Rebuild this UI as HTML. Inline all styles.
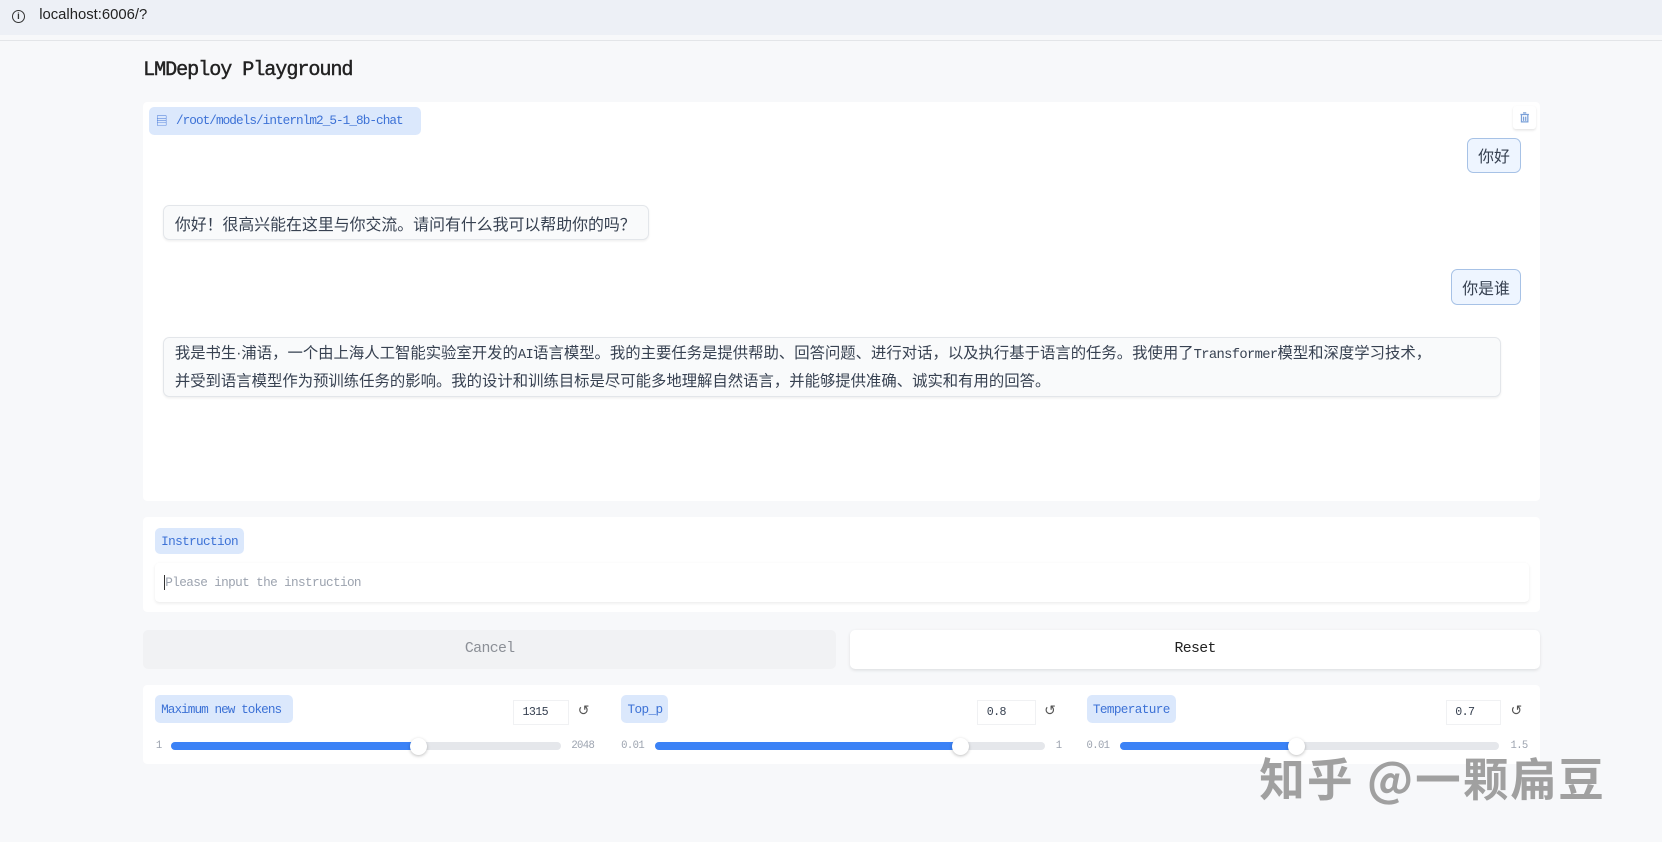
<!DOCTYPE html>
<html><head><meta charset="utf-8"><style>
html{zoom:1.06}
body{margin:0;width:1568px;height:794px;background:#f7f8fa;position:relative;overflow:hidden;font-family:"Liberation Sans","Noto Sans CJK SC",sans-serif;}
.a{position:absolute}
.mono{font-family:"Liberation Mono","Noto Sans CJK SC",monospace;white-space:nowrap;letter-spacing:-0.6px}
.panel{background:#fff;border-radius:4px}
.chip{background:#dbe8fc;color:#3d72d6;border-radius:5px;font-size:12px;display:flex;align-items:center;padding:0 6px;box-sizing:border-box}
.ub{background:#eef5ff;border:1px solid #a7c2e6;border-radius:6px;color:#374151;font-size:15px;display:flex;align-items:center;justify-content:center;box-sizing:border-box}
.bb{background:#f9fafb;border:1px solid #e3e6ea;border-radius:6px;color:#374151;font-size:15px;box-sizing:border-box;box-shadow:0 1px 2px rgba(0,0,0,.06)}
.track{height:8px;border-radius:4px;background:#e5e7eb}
.fill{height:8px;border-radius:4px;background:#3b82f6;position:absolute;left:0;top:0}
.knob{width:16px;height:16px;border-radius:50%;background:#fff;position:absolute;top:-4px;box-shadow:0 1px 3px rgba(0,0,0,.25)}
.sm{font-size:10px;color:#9ca3af}
.num{font-size:11px;color:#374151;background:#fff;border:1px solid #f0f1f3;box-sizing:border-box;display:flex;align-items:center;padding-left:8px}
.rs{font-size:13px;color:#555}
</style></head><body>
<div class="a" style="left:0;top:0;width:1568px;height:33px;background:#edf0f6"></div>
<div class="a" style="left:0;top:38px;width:1568px;height:1px;background:#e3e5e8"></div>
<div class="a" style="left:11px;top:9px;width:11px;height:11px;border:1.5px solid #333;border-radius:50%;font-size:9px;line-height:11px;text-align:center;font-weight:bold;color:#333">i</div>
<div class="a" style="left:37px;top:7px;font-size:14px;color:#222">localhost:6006/?</div>

<div class="a mono" style="left:135px;top:56px;font-size:19px;color:#222;letter-spacing:-1px;-webkit-text-stroke:0.4px #222">LMDeploy Playground</div>

<div class="a panel" style="left:135px;top:96px;width:1318px;height:377px"></div>
<div class="a chip mono" style="left:141px;top:101px;width:256px;height:26px;font-size:12px;letter-spacing:-0.9px"><span style="font-size:11px;margin-right:8px;letter-spacing:0">&#9636;</span>/root/models/internlm2_5-1_8b-chat</div>
<div class="a" style="left:1427px;top:100px;width:22px;height:22px;background:#fff;box-shadow:0 1px 2px rgba(0,0,0,.1);border-radius:3px">
<svg width="22" height="22" viewBox="0 0 22 22"><path d="M7 8h8M8 8v7h6V8M9.5 6.5h3M10 10v4M12 10v4" stroke="#7aa0d8" fill="none" stroke-width="1.2"/></svg></div>
<div class="a ub" style="left:1384px;top:130px;width:51px;height:33px">你好</div>
<div class="a bb" style="left:154px;top:193px;width:458px;height:33px;padding:6px 10px">你好！很高兴能在这里与你交流。请问有什么我可以帮助你的吗？</div>
<div class="a ub" style="left:1369px;top:254px;width:66px;height:34px">你是谁</div>
<div class="a bb" style="left:154px;top:318px;width:1262px;height:57px;padding:3px 10px;line-height:24px;font-size:14.5px">我是书生·浦语，一个由上海人工智能实验室开发的<span class="mono" style="font-size:13px">AI</span>语言模型。我的主要任务是提供帮助、回答问题、进行对话，以及执行基于语言的任务。我使用了<span class="mono" style="font-size:13px">Transformer</span>模型和深度学习技术，<br>并受到语言模型作为预训练任务的影响。我的设计和训练目标是尽可能多地理解自然语言，并能够提供准确、诚实和有用的回答。</div>

<div class="a panel" style="left:135px;top:488px;width:1318px;height:89px"></div>
<div class="a chip mono" style="left:146px;top:498px;width:84px;height:25px">Instruction</div>
<div class="a mono" style="left:146px;top:531px;width:1296px;height:37px;background:#fff;box-shadow:0 1px 3px rgba(0,0,0,.08);border-radius:4px;font-size:12px;color:#9ca3af;display:flex;align-items:center;padding-left:9px;box-sizing:border-box"><span style="border-left:1px solid #333;height:14px"></span>Please input the instruction</div>

<div class="a mono" style="left:135px;top:594px;width:654px;height:37px;background:#f1f2f4;border-radius:5px;color:#8b8f96;font-size:14px;display:flex;align-items:center;justify-content:center">Cancel</div>
<div class="a mono" style="left:802px;top:594px;width:651px;height:37px;background:#fff;border-radius:5px;box-shadow:0 1px 3px rgba(0,0,0,.1);color:#222;font-size:14px;display:flex;align-items:center;justify-content:center">Reset</div>

<div class="a panel" style="left:135px;top:646px;width:1318px;height:75px"></div>
<div class="a chip mono" style="left:146px;top:656px;width:130px;height:26px;letter-spacing:-0.9px">Maximum new tokens</div>
<div class="a num mono" style="left:484px;top:660px;width:53px;height:24px">1315</div>
<div class="a rs" style="left:545px;top:663px">↺</div>
<div class="a sm mono" style="left:147px;top:698px">1</div>
<div class="a track" style="left:161px;top:700px;width:368px"><div class="fill" style="width:234px"></div><div class="knob" style="left:226px"></div></div>
<div class="a sm mono" style="left:539px;top:698px">2048</div>

<div class="a chip mono" style="left:586px;top:656px;width:44px;height:26px">Top_p</div>
<div class="a num mono" style="left:922px;top:660px;width:55px;height:24px">0.8</div>
<div class="a rs" style="left:985px;top:663px">↺</div>
<div class="a sm mono" style="left:586px;top:698px">0.01</div>
<div class="a track" style="left:618px;top:700px;width:368px"><div class="fill" style="width:288px"></div><div class="knob" style="left:280px"></div></div>
<div class="a sm mono" style="left:996px;top:698px">1</div>

<div class="a chip mono" style="left:1025px;top:656px;width:84px;height:26px">Temperature</div>
<div class="a num mono" style="left:1364px;top:660px;width:52px;height:24px">0.7</div>
<div class="a rs" style="left:1425px;top:663px">↺</div>
<div class="a sm mono" style="left:1025px;top:698px">0.01</div>
<div class="a track" style="left:1057px;top:700px;width:357px"><div class="fill" style="width:166px"></div><div class="knob" style="left:158px"></div></div>
<div class="a sm mono" style="left:1425px;top:698px">1.5</div>

<div class="a" style="left:1188px;top:702px;font-size:43px;font-weight:bold;color:#a0a0a0;font-family:'Noto Sans CJK SC',sans-serif;letter-spacing:2px;white-space:nowrap">知乎 @一颗扁豆</div>
</body></html>
